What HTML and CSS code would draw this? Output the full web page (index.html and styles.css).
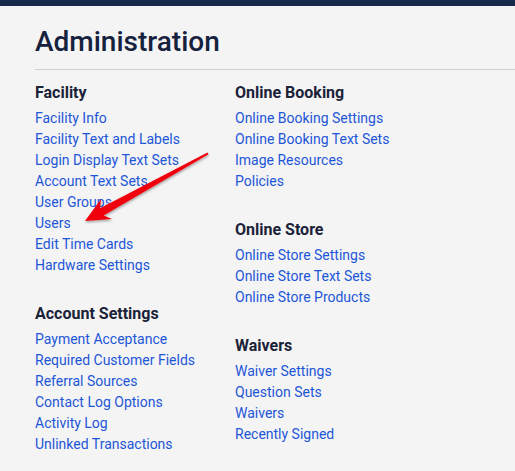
FILE: index.html
```html
<!DOCTYPE html>
<html>
<head>
<meta charset="utf-8">
<link rel="stylesheet" href="styles.css">
</head>
<body>
<div class="topbar"></div>
<main class="page">
  <h1 class="title">Administration</h1>
  <div class="columns">
    <div class="col">
      <section class="group">
        <h2>Facility</h2>
        <a href="#">Facility Info</a>
        <a href="#">Facility Text and Labels</a>
        <a href="#">Login Display Text Sets</a>
        <a href="#">Account Text Sets</a>
        <a href="#">User Groups</a>
        <a href="#">Users</a>
        <a href="#">Edit Time Cards</a>
        <a href="#">Hardware Settings</a>
      </section>
      <section class="group">
        <h2>Account Settings</h2>
        <a href="#">Payment Acceptance</a>
        <a href="#">Required Customer Fields</a>
        <a href="#">Referral Sources</a>
        <a href="#">Contact Log Options</a>
        <a href="#">Activity Log</a>
        <a href="#">Unlinked Transactions</a>
      </section>
    </div>
    <div class="col">
      <section class="group">
        <h2>Online Booking</h2>
        <a href="#">Online Booking Settings</a>
        <a href="#">Online Booking Text Sets</a>
        <a href="#">Image Resources</a>
        <a href="#">Policies</a>
      </section>
      <section class="group">
        <h2>Online Store</h2>
        <a href="#">Online Store Settings</a>
        <a href="#">Online Store Text Sets</a>
        <a href="#">Online Store Products</a>
      </section>
      <section class="group">
        <h2>Waivers</h2>
        <a href="#">Waiver Settings</a>
        <a href="#">Question Sets</a>
        <a href="#">Waivers</a>
        <a href="#">Recently Signed</a>
      </section>
    </div>
  </div>
</main>
<svg class="arrow" width="515" height="471" viewBox="0 0 515 471">
  <defs>
    <filter id="sh" x="-20%" y="-20%" width="140%" height="140%">
      <feDropShadow dx="0.5" dy="1.5" stdDeviation="1.2" flood-color="#000" flood-opacity="0.35"/>
    </filter>
  </defs>
  <polygon filter="url(#sh)" fill="#f00010"
    points="85,221 101,199 100,208.3 207.5,152.5 208.5,154.3 103.6,215.5 112,219"/>
</svg>
</body>
</html>
```
FILE: styles.css
```css
html, body {
  margin: 0;
  padding: 0;
}
body {
  background: #f4f4f4;
  font-family: Roboto, "Liberation Sans", sans-serif;
  color: #1a2238;
  width: 515px;
  height: 471px;
  overflow: hidden;
  position: relative;
}
.topbar {
  height: 6px;
  background: #172a4c;
}
.page {
  padding-left: 35px;
}
.title {
  margin: 18px 0 0 0;
  font-size: 28px;
  line-height: 36px;
  font-weight: 500;
  color: #16213d;
  padding-bottom: 9px;
  border-bottom: 1px solid #cfcfcf;
}
.columns {
  display: flex;
  margin-top: 12px;
}
.col {
  width: 200px;
  display: flex;
  flex-direction: column;
  gap: 27px;
}
.group {
  display: flex;
  flex-direction: column;
}
.group h2 {
  margin: 0 0 5px 0;
  font-size: 16px;
  line-height: 21px;
  font-weight: 700;
  color: #1a2238;
}
.group a {
  font-size: 14px;
  line-height: 21px;
  color: #1d56d8;
  text-decoration: none;
  white-space: nowrap;
}
.arrow {
  position: absolute;
  left: 0;
  top: 0;
  pointer-events: none;
}
```
